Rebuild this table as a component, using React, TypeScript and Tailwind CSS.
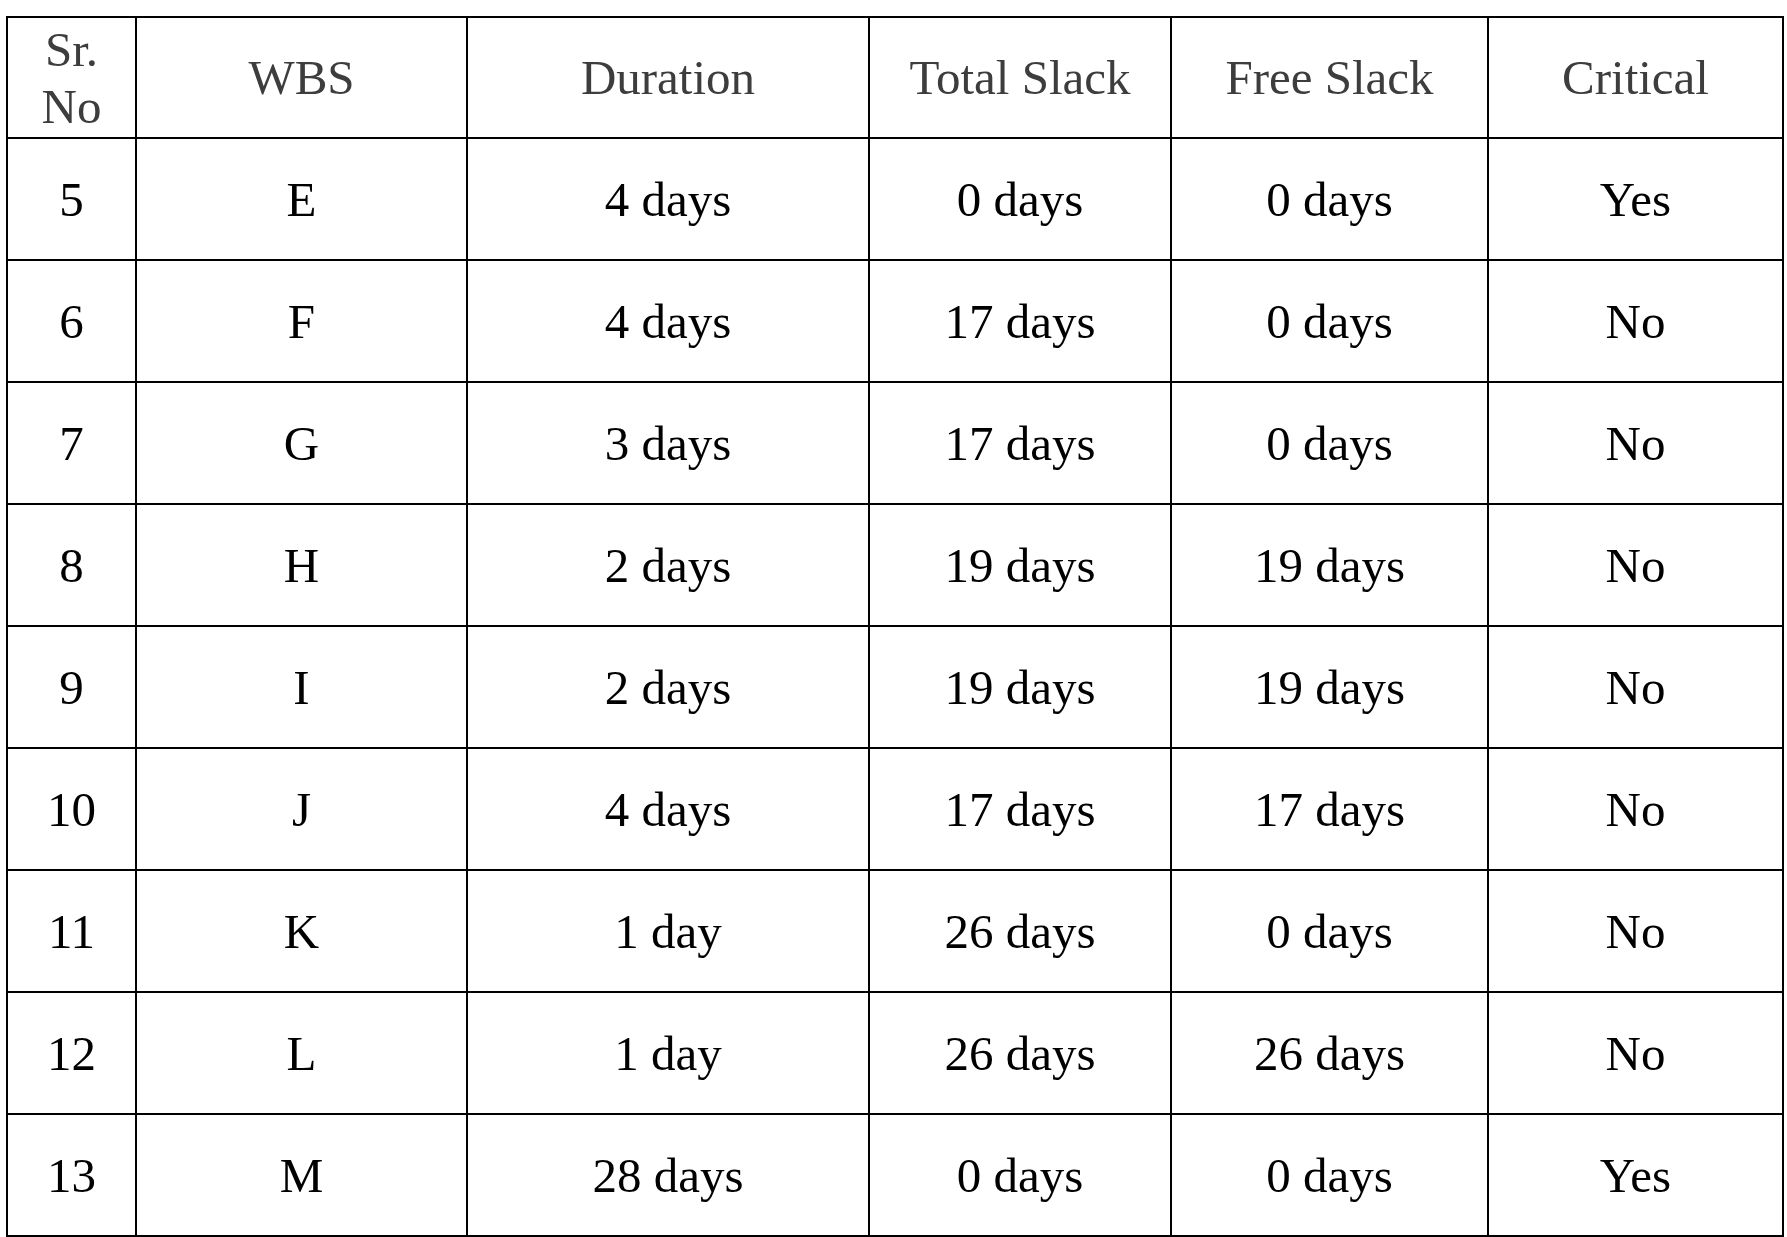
const headers = ['Sr.\nNo', 'WBS', 'Duration', 'Total Slack', 'Free Slack', 'Critical']

const rows = [
  ['5', 'E', '4 days', '0 days', '0 days', 'Yes'],
  ['6', 'F', '4 days', '17 days', '0 days', 'No'],
  ['7', 'G', '3 days', '17 days', '0 days', 'No'],
  ['8', 'H', '2 days', '19 days', '19 days', 'No'],
  ['9', 'I', '2 days', '19 days', '19 days', 'No'],
  ['10', 'J', '4 days', '17 days', '17 days', 'No'],
  ['11', 'K', '1 day', '26 days', '0 days', 'No'],
  ['12', 'L', '1 day', '26 days', '26 days', 'No'],
  ['13', 'M', '28 days', '0 days', '0 days', 'Yes'],
]

export default function App() {
  return (
    <div className="min-h-screen bg-white pl-[6px] pt-[16px] font-['Liberation_Serif','Times_New_Roman',serif]">
      <table className="table-fixed border-collapse border-2 border-black w-[1776px] text-[49px] leading-[57px]">
        <colgroup>
          <col className="w-[129px]" />
          <col className="w-[331px]" />
          <col className="w-[402px]" />
          <col className="w-[302px]" />
          <col className="w-[317px]" />
          <col className="w-[295px]" />
        </colgroup>
        <thead>
          <tr className="h-[121px]">
            {headers.map(h => (
              <th key={h} className="border-2 border-black text-center align-middle font-normal text-[#3d3d3d] whitespace-pre-line p-0">
                {h}
              </th>
            ))}
          </tr>
        </thead>
        <tbody>
          {rows.map(r => (
            <tr key={r[0]} className="h-[122px]">
              {r.map((c, i) => (
                <td key={i} className="border-2 border-black text-center align-middle text-black p-0">{c}</td>
              ))}
            </tr>
          ))}
        </tbody>
      </table>
    </div>
  )
}
